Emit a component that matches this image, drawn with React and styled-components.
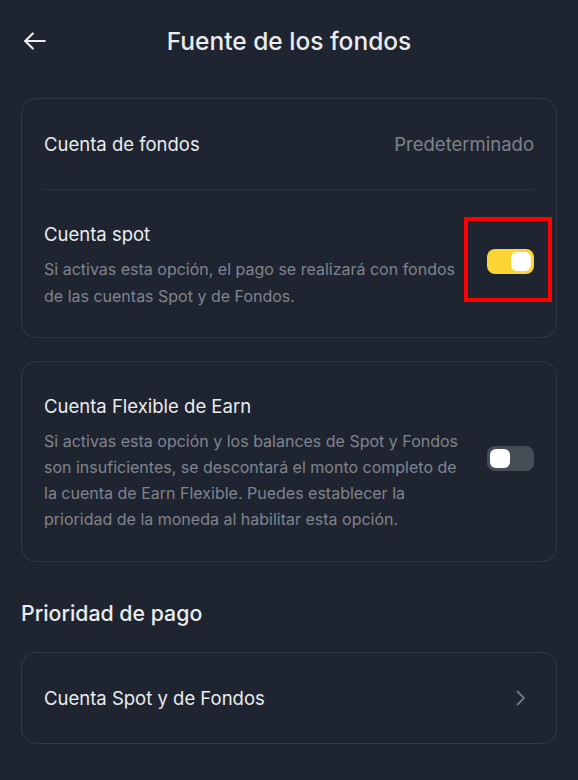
import React, { useState } from "react";
import styled, { createGlobalStyle } from "styled-components";

const GlobalStyle = createGlobalStyle`
  html, body {
    margin: 0;
    padding: 0;
    background: #1f2530;
  }
  body {
    font-family: Inter, "Noto Sans", sans-serif;
    -webkit-font-smoothing: antialiased;
  }
`;

const Page = styled.div`
  width: 578px;
  min-height: 780px;
  background: #1f2530;
  color: #eaecef;
  padding: 0 21px 0 21px;
  box-sizing: border-box;
`;

const Header = styled.div`
  height: 82px;
  display: flex;
  align-items: center;
  position: relative;
  justify-content: center;
  margin-bottom: 16px;
`;

const BackButton = styled.button`
  position: absolute;
  left: 0;
  top: 27px;
  width: 28px;
  height: 28px;
  background: none;
  border: none;
  padding: 0;
  color: #eaecef;
  cursor: pointer;
  display: flex;
  align-items: center;
  justify-content: center;
`;

const Title = styled.h1`
  margin: 0;
  font-size: 24.5px;
  font-weight: 500;
  color: #eaecef;
`;

const Card = styled.div`
  border: 1px solid #323843;
  border-radius: 15px;
  padding: 0 22px;
  margin-bottom: 23px;
`;

const Row = styled.div`
  display: flex;
  align-items: center;
  justify-content: space-between;
  height: ${(p) => p.height || "auto"};
  border-bottom: ${(p) => (p.divider ? "1px solid #2d333d" : "none")};
`;

const Label = styled.div`
  font-size: 18.5px;
  line-height: 24px;
  font-weight: 400;
  color: #eaecef;
`;

const Value = styled.div`
  font-size: 18.5px;
  color: #7d828c;
`;

const OptionRow = styled.div`
  display: flex;
  align-items: center;
  justify-content: space-between;
  padding: ${(p) => p.padding};
  gap: 20px;
`;

const OptionText = styled.div`
  flex: 1;
`;

const Description = styled.p`
  margin: 10px 0 0 0;
  font-size: 16px;
  line-height: ${(p) => p.lh || "26.5px"};
  color: #7f848e;
  max-width: 418px;
`;

const ToggleWrap = styled.div`
  position: relative;
  flex-shrink: 0;
  display: flex;
  align-items: center;
  margin-bottom: 10px;
`;

const Highlight = styled.div`
  position: absolute;
  left: -23px;
  top: -32px;
  width: 80px;
  height: 77px;
  border: 4px solid #ff0000;
`;

const Toggle = styled.button`
  width: 47px;
  height: 25px;
  border-radius: 8px;
  border: none;
  padding: 3px;
  display: flex;
  justify-content: ${(p) => (p.on ? "flex-end" : "flex-start")};
  background: ${(p) => (p.on ? "#fcd535" : "#474d57")};
  cursor: pointer;
  box-sizing: border-box;
`;

const Knob = styled.span`
  width: 20px;
  height: 19px;
  border-radius: 6px;
  background: #ffffff;
`;

const SectionTitle = styled.h2`
  margin: 38px 0 26px 0;
  font-size: 21.3px;
  line-height: 26px;
  font-weight: 500;
  color: #eaecef;
`;

const Chevron = styled.span`
  color: #6f7580;
  display: flex;
  margin-right: 8px;
`;

export default function App() {
  const [spot, setSpot] = useState(true);
  const [earn, setEarn] = useState(false);

  return (
    <Page>
      <GlobalStyle />
      <Header>
        <BackButton aria-label="back">
          <svg width="26" height="26" viewBox="0 0 24 24" fill="none" stroke="currentColor" strokeWidth="2" strokeLinecap="round" strokeLinejoin="round">
            <path d="M21 12H3" />
            <path d="M10 5l-7 7 7 7" />
          </svg>
        </BackButton>
        <Title>Fuente de los fondos</Title>
      </Header>

      <Card>
        <Row height="90px" divider>
          <Label>Cuenta de fondos</Label>
          <Value>Predeterminado</Value>
        </Row>
        <OptionRow padding="32px 0 27px 0">
          <OptionText>
            <Label>Cuenta spot</Label>
            <Description lh="27px">
              Si activas esta opción, el pago se realizará con fondos de las cuentas Spot y de Fondos.
            </Description>
          </OptionText>
          <ToggleWrap>
            <Highlight />
            <Toggle on={spot ? 1 : 0} onClick={() => setSpot(!spot)}>
              <Knob />
            </Toggle>
          </ToggleWrap>
        </OptionRow>
      </Card>

      <Card>
        <OptionRow padding="32px 0 29px 0">
          <OptionText>
            <Label>Cuenta Flexible de Earn</Label>
            <Description lh="26px">
              Si activas esta opción y los balances de Spot y Fondos son insuficientes, se descontará el monto completo de la cuenta de Earn Flexible. Puedes establecer la prioridad de la moneda al habilitar esta opción.
            </Description>
          </OptionText>
          <ToggleWrap>
            <Toggle on={earn ? 1 : 0} onClick={() => setEarn(!earn)}>
              <Knob />
            </Toggle>
          </ToggleWrap>
        </OptionRow>
      </Card>

      <SectionTitle>Prioridad de pago</SectionTitle>

      <Card>
        <Row height="90px">
          <Label>Cuenta Spot y de Fondos</Label>
          <Chevron>
            <svg width="11" height="16" viewBox="0 0 11 16" fill="none" stroke="currentColor" strokeWidth="1.8" strokeLinecap="round" strokeLinejoin="round">
              <path d="M2.5 1.5L9 8l-6.5 6.5" />
            </svg>
          </Chevron>
        </Row>
      </Card>
    </Page>
  );
}
